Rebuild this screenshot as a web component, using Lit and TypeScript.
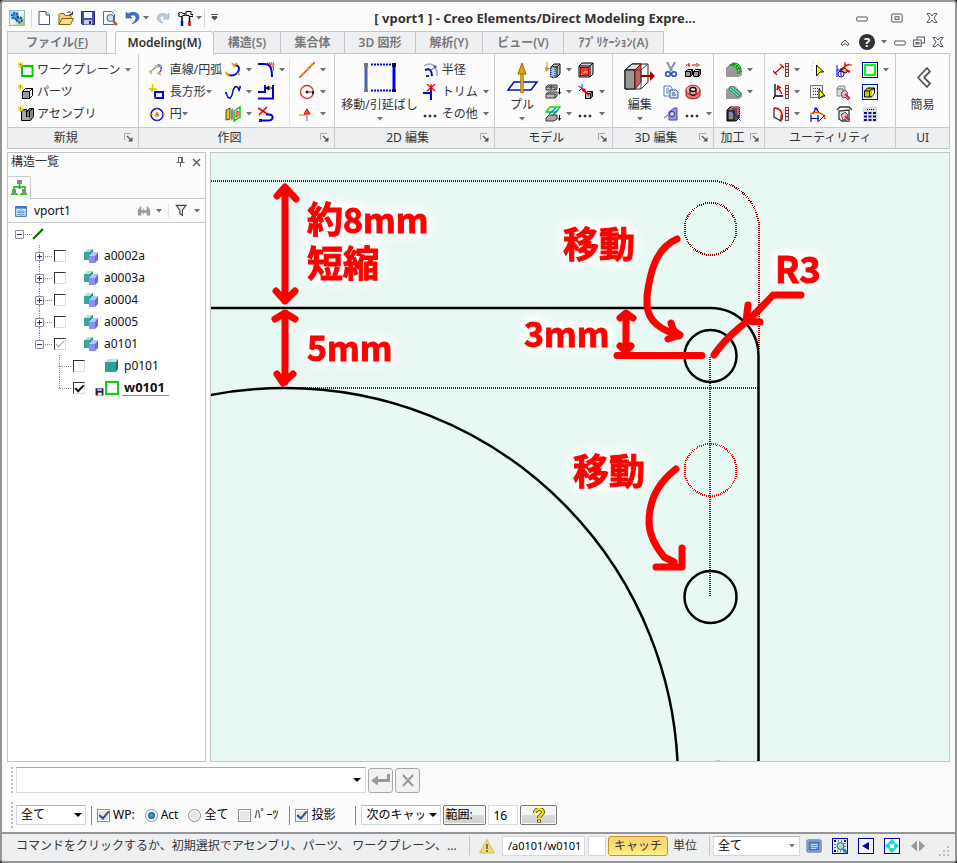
import { LitElement, html, svg, css, nothing, type TemplateResult } from "lit";
import { customElement, property, state } from "lit/decorators.js";
import { classMap } from "lit/directives/class-map.js";

type Art = TemplateResult;

const cubeArt = (x: number, y: number, s: number, d: number, face = "#999", top = "#ddd", side = "#666", line = "#000") => svg`
  <path d="M${x} ${y + d}L${x + d} ${y}H${x + s + d}L${x + s} ${y + d}Z" fill=${top} stroke=${line}/>
  <path d="M${x + s} ${y + d}L${x + s + d} ${y}V${y + s}L${x + s} ${y + s + d}Z" fill=${side} stroke=${line}/>
  <path d="M${x} ${y + d}H${x + s}V${y + s + d}H${x}Z" fill=${face} stroke=${line}/>`;

const sparkArt = svg`<path d="M0 0.5L5 5.5M5 0.5L0 5.5M2.500 0V6M0 3H5.500" stroke="#d8c800" stroke-width="1"/><path d="M2 2h1v1h-1z" fill="#7a6a00"/>`;
const rulerArt = svg`<rect x="12.500" y="1.500" width="3" height="13" fill="#e4e4e4" stroke="#555"/><path d="M13 4.500h2M13 7.500h2M13 10.500h2" stroke="#d00"/>`;
const hammerArt = svg`<path d="M5 9l4-3 3 3-1 2 3 3-2 2-3-3-2 1z" fill="#ccc" stroke="#555"/><path d="M9 10l4 4" stroke="#d22" stroke-width="2"/>`;

const ICONS: Record<string, Art> = {
  app: svg`<defs><linearGradient id="ga" x1="0" y1="0" x2="1" y2="1"><stop offset="0" stop-color="#a8d0f4"/><stop offset=".5" stop-color="#eef6fc"/><stop offset="1" stop-color="#8cc63f"/></linearGradient></defs><rect x=".5" y=".5" width="15" height="15" fill="url(#ga)" stroke="#9bb"/><circle cx="6" cy="6" r="3" fill="#5b9bd5" stroke="#1c5f9e" stroke-width="2.500" stroke-dasharray="2 1"/><circle cx="10.500" cy="10" r="2.500" fill="#7fb2dd" stroke="#174f86" stroke-width="2" stroke-dasharray="2 1"/>`,
  page: svg`<path d="M3 1.500h7l3.500 3.500v9.500H3z" fill="#fff" stroke="#3f5878"/><path d="M10 1.500v3.500h3.500" fill="#dce6f2" stroke="#3f5878"/>`,
  folder: svg`<path d="M1 14.500V4.500l1-1h4l1 2h6v3" fill="#f5d27a" stroke="#8a6210"/><path d="M1 14.500L4 8.500h11.500L12.500 14.500z" fill="#fbe08c" stroke="#8a6210"/><path d="M9 3c2-2 4-1 4.500 1M14.500 1.500v3h-3" fill="none" stroke="#333"/>`,
  disk: svg`<path d="M1.500 1.500h13v13h-12l-1-1z" fill="#4750b8" stroke="#252a70"/><rect x="4" y="2" width="8" height="6" fill="#f4f6ff"/><rect x="4" y="10" width="8" height="4.500" fill="#ccd"/><rect x="9" y="11" width="2" height="3" fill="#252a70"/>`,
  minidisk: svg`<path d="M1 2h14v13H2l-1-1z" fill="#223"/><rect x="4" y="3" width="8" height="4" fill="#bbc"/><rect x="5" y="10" width="7" height="5" fill="#eee"/>`,
  preview: svg`<path d="M1.500 1.500h8l3 3v10h-11z" fill="#fff" stroke="#5a6a80"/><circle cx="8.500" cy="8" r="3.500" fill="#cfe4f5" stroke="#456"/><path d="M11 11l4 4" stroke="#b06a20" stroke-width="2.500"/>`,
  undo: svg`<path d="M2 2v6h6L6 6c3-2 6-1 6 2 0 2-2 4-4 6 5-2 7-4 7-7 0-5-7-6-11-3z" fill="#3f74c4" stroke="#2a56a0" stroke-width=".6"/>`,
  redo: svg`<path d="M14 3v6H8l2-2c-3-2-5-1-5 1 0 2 2 4 3 5-4-1-6-3-6-5 0-4 6-6 10-3z" fill="#b9cde4" stroke="#8faaca" stroke-width=".6"/>`,
  tools: svg`<path d="M1 3.500c2-2 4-1 5 0h2v2H6c-1 1-3 2-5 0l2-1zM9 1.500h5v3h2v2h-3l-1-1H9z" fill="#fff" stroke="#000"/><path d="M5 6v5M12.500 6v5" stroke="#000" stroke-width="1.500"/><path d="M5 11v5" stroke="#00c" stroke-width="2.500"/><path d="M12.500 11v5" stroke="#d00" stroke-width="2.500"/>`,
  workplane: svg`<rect x="4" y="4" width="10.500" height="10" fill="#fff" stroke="#0c0" stroke-width="2"/>${sparkArt}`,
  part: svg`${cubeArt(4.5, 4.5, 7, 3, "#999", "#ddd", "#fff")}${sparkArt}`,
  assembly: svg`<path d="M3.500 5.500l2-2h3l1 2 2-3h4v8l-3 4h-9z" fill="#888" stroke="#000"/><path d="M8.500 6v5h3V5l3-2M8 6l2-2" fill="none" stroke="#000"/><path d="M4 6h4v5h3v3H4z" fill="#aaa"/>${sparkArt}`,
  arcline: svg`<path d="M1 10l6-5M8 3c5-1 6 4 2 8" fill="none" stroke="#8a93b8" stroke-width="1.500"/><path d="M0 9l3 3M6 3l3 3M8 11l4 2" stroke="#e0b020" stroke-width="1.500"/><path d="M9 4c4 0 4 4 1 7" fill="none" stroke="#33a" stroke-dasharray="2 1"/>`,
  rect: svg`<rect x="6" y="8" width="8" height="6" fill="none" stroke="#00f" stroke-width="2"/><path d="M3.500 0v7M0 5h8M1 4l2 3 3-3" fill="none" stroke="#e5c400" stroke-width="1.500"/><circle cx="5.500" cy="14" r="1" fill="#e80"/>`,
  circle: svg`<circle cx="8" cy="8.500" r="6" fill="none" stroke="#00f" stroke-width="1.500"/><path d="M8 0v4M8 13v3M0 8.500h4M12 8.500h4" stroke="#e0a000"/><path d="M8 6l2 4H6z" fill="#ffd060" stroke="#e08000"/><path d="M7.500 8h1v1h-1z" fill="#00c"/>`,
  arc2: svg`<path d="M2 12c5 3 11 1 12-5 0-3-2-4-5-4" fill="none" stroke="#0018e0" stroke-width="2"/><path d="M0 10l4 4M7 1l3 4M10 3l2-2M12 11l3 2" stroke="#e8a800" stroke-width="2"/>`,
  spline: svg`<path d="M1.500 9c1 7 5 6 6 0S11 1 13 4s0 4 2 0" fill="none" stroke="#0000d0" stroke-width="1.500"/><path d="M0 8h2v2H0zM4 13h2v2H4zM14 2h2v2h-2zM9 2h2v2H9z" fill="#335"/>`,
  offset: svg`<path d="M1 4l4-2v11l-4 1z" fill="#ddc800" stroke="#444"/><path d="M6 4l2-2v11l-2 2z" fill="#888"/><path d="M9 5l6-4v10l-6 4z" fill="#fff" stroke="#0c0" stroke-width="1.500"/><path d="M11 6l2-1v5l-2 1z" fill="#fff" stroke="#d00"/>`,
  fillet: svg`<path d="M0 2h6c6 0 8 3 8 13" fill="none" stroke="#00c" stroke-width="2"/><path d="M9 1h7v8c0-4-3-7-7-8" fill="#f7a0a0" stroke="#d00" stroke-width="1.200" stroke-dasharray="1 1"/>`,
  corner: svg`<path d="M0 8h7V1M0 14.500h15V1" fill="none" stroke="#00e" stroke-width="2"/><path d="M9 4h6M8 4l3-2v4z" stroke="#000" fill="#000"/>`,
  tangent: svg`<path d="M1 9l8-8M0 2l11 7" stroke="#d00" stroke-width="1.500"/><path d="M2 14.500h8c6 0 6-6 1-6l-3 0" fill="none" stroke="#00c" stroke-width="2"/><path d="M1 13h3v3H1z" fill="#224"/>`,
  cline: svg`<path d="M0 16L16 0" stroke="#d33" stroke-width="1.400"/><path d="M3 13l2-2M8 8l2-2M12 3l2-1" stroke="#e6a100" stroke-width="2.500"/>`,
  ccircle: svg`<circle cx="8" cy="8" r="6.500" fill="none" stroke="#d33" stroke-width="1.400"/><path d="M8 8h7" stroke="#333"/><circle cx="8" cy="8" r="1.500" fill="#222"/><path d="M13 7h2v3h-2z" fill="#222"/>`,
  cperp: svg`<path d="M0 9h8" stroke="#e6c080" stroke-width="2"/><path d="M8 9v6" stroke="#caa" stroke-width="2"/><path d="M8 9h7" stroke="#e8d0b0" stroke-width="1"/><path d="M8 3l3 5H5z" fill="#f55" stroke="#c00"/>`,
  radius: svg`<path d="M1 4c7-5 14 0 13 10" fill="none" stroke="#99f" stroke-width="1.500"/><path d="M2 8c5-2 7 1 7 6" fill="none" stroke="#00d" stroke-width="2"/><path d="M3 13h3v2H3z" fill="#333"/><path d="M7 9l5-4" stroke="#557"/><path d="M10 3l4 1-2 3z" fill="#557"/>`,
  trim: svg`<path d="M0 9h8M8 3v13" fill="none" stroke="#00e" stroke-width="2"/><path d="M4 0l8 7M12 0l-8 7M8 0v7" stroke="#e00" stroke-width="1.200"/>`,
  dots: svg`<path d="M1 9h2v2H1zM6 9h2v2H6zM11 9h2v2h-2z" fill="#333" stroke="#333" stroke-width=".5"/>`,
  pullblock: svg`<path d="M6 5l3-3h6v10l-3 3H6z" fill="#bbb" stroke="#000"/><path d="M12 5v10M12 5l3-3M6 5h6" stroke="#000"/><path d="M6 5h4v10H6z" fill="#9cf" stroke="#009" stroke-dasharray="1 1"/><path d="M2 0v8M0 6l2 3 2-3z" stroke="#d09000" fill="#f0b000"/>`,
  stack: svg`<path d="M1 3l2-2h9v4l-1 1H1zM1 10l2-2h9v4l-2 2H1z" fill="#bbb" stroke="#333"/><path d="M1 3h9v3M6 1v5M1 10h9v4" stroke="#333" fill="none"/><path d="M14.500 4v5" stroke="#000"/><path d="M13 8h3l-1.500 3z" fill="#000"/>`,
  loft: svg`<path d="M1 6l4-5h10l-4 5z" fill="#dfd" stroke="#0d0" stroke-width="1.400"/><path d="M4 8l7-6M8 9l5-5" stroke="#08f" stroke-width="1.500"/><path d="M1 12l3-3h8v4l-3 2H1z" fill="#aaa" stroke="#333"/><path d="M14.500 9v4" stroke="#000"/><path d="M13 12h3l-1.500 3z" fill="#000"/>`,
  shell: svg`<path d="M1 4l3-3h11v11l-3 3H1z" fill="#ccc" stroke="#000"/><path d="M12 4v11M12 4l3-3M1 4h11" stroke="#000"/><rect x="2.500" y="5.500" width="8" height="8" fill="#f33" stroke="#a00"/><path d="M3 13l3-3h4" fill="none" stroke="#fbb"/>`,
  movepart: svg`${cubeArt(7.5, 7.5, 5, 2, "#bbb", "#ddd", "#777")}<path d="M0 2l4 2M4 0v4L1 7" stroke="#22c" fill="none"/><path d="M4 5l7 6" stroke="#d00" stroke-width="1.800"/><path d="M3 4l5 1-3 3z" fill="#d00"/>`,
  scissors: svg`<path d="M4 0l5 9M12 0L7 9" stroke="#7c93b8" stroke-width="2"/><circle cx="5" cy="12" r="2.300" fill="none" stroke="#2456a8" stroke-width="1.600"/><circle cx="11" cy="12" r="2.300" fill="none" stroke="#2456a8" stroke-width="1.600"/>`,
  copy: svg`<path d="M1 2h6l2 2v8H1z" fill="#fff" stroke="#567bb0"/><path d="M3 5h3M3 7h4M3 9h3" stroke="#567bb0"/><path d="M7 6h6l2 2v6H7z" fill="#dbe8f7" stroke="#2c5596"/><path d="M9 9h3M9 11h4" stroke="#2c5596"/>`,
  paste: svg`<path d="M6 14V6l5-4h3v12z" fill="#9494ee" stroke="#44a"/><circle cx="9" cy="8" r="2.500" fill="#ddf" stroke="#225"/><path d="M1 12l4-3 2 3" fill="none" stroke="#88a" stroke-width="1.500"/>`,
  pattern: svg`<path d="M1 3h14" stroke="#c00" stroke-dasharray="4 2"/><path d="M4 1v4M12 1v4" stroke="#c00"/>${cubeArt(0.5, 7.5, 5, 2, "#999", "#ccc", "#777")}${cubeArt(8.5, 7.5, 5, 2, "#999", "#ddd", "#777")}`,
  ring: svg`<path d="M1 6v5c0 5 14 5 14 0V6z" fill="#e07878" stroke="#a11"/><ellipse cx="8" cy="6" rx="7" ry="4.800" fill="#f0a8a8" stroke="#b22"/><ellipse cx="8" cy="5.500" rx="3" ry="2" fill="#fff" stroke="#000" stroke-width="1.300"/><path d="M5 6v4c1 2 5 2 6 0V6" fill="none" stroke="#000"/>`,
  blend: svg`<path d="M0 6l4-4h5l7 7v4l-3 2H0z" fill="#999"/><path d="M4 3c6 0 8 4 8 9l3-3c0-6-3-8-8-8z" fill="#7e7" stroke="#080"/><path d="M6 2c6 0 7 4 8 8M9 1l-2 2M12 3l-2 2M14 6l-3 1" stroke="#080" fill="none"/>`,
  chamfer: svg`<path d="M0 6l4-4h5l7 7v4l-3 2H0z" fill="#999"/><path d="M3 5l3-3 9 8-3 3z" fill="#9e9" stroke="#185"/><path d="M5 4l8 7" stroke="#28c" stroke-width="1.500"/>`,
  draft: svg`<path d="M1 4l3-3h9v11l-3 3H1z" fill="#555" stroke="#000"/><path d="M2 5h6v9H2z" fill="#888" stroke="#000"/><path d="M4 4l3-3h5v8" fill="none" stroke="#f06080" stroke-width="1.500"/><path d="M13.500 1v14M6 6l10 10" stroke="#00d" stroke-dasharray="1 1"/>`,
  measure1: svg`<path d="M2 11l8-7" stroke="#d00" stroke-width="1.300"/><path d="M0 9l4 4M7 2l4 4" stroke="#d00" stroke-width="1.300"/>${rulerArt}`,
  measure2: svg`<path d="M2 0v12h8M2 12l-2 3" fill="none" stroke="#000" stroke-width="1.300"/><path d="M9 10L5 3M4 6l1-4 3 2" fill="none" stroke="#d00" stroke-width="1.500"/>${rulerArt}`,
  measure3: svg`<path d="M1 2v9l7 4V9" fill="none" stroke="#333" stroke-width="1.300"/><path d="M1 2c6 0 9 4 8 12" fill="none" stroke="#d00" stroke-width="1.500"/>${rulerArt}`,
  pick: svg`<path d="M6.500 3l7 7H10l-3.500 4z" fill="#ff0" stroke="#000"/><path d="M1 4h2M3 0l1 2M8 1l1-1M1 8l2-1" stroke="#d8c000" stroke-dasharray="1 1"/>`,
  list: svg`<rect x=".5" y="1.500" width="12" height="12" fill="#eee" stroke="#777"/><path d="M3 4.500h8M3 7.500h8M3 10.500h8" stroke="#333" stroke-dasharray="1 1"/><path d="M9 5l6 7h-3l-3 3z" fill="#ff0" stroke="#000"/>`,
  dims: svg`<path d="M1 3v12M5 6v8M1 8h4" stroke="#00c"/><path d="M8 3h8M9 0v6M4 8l9-6" stroke="#d00" stroke-width="1.200"/><path d="M4 9l5-3 3 3-2 2z" fill="#bbb" stroke="#600"/><circle cx="5" cy="12" r="3" fill="none" stroke="#00c"/><path d="M10 8l4 2" stroke="#d00" stroke-width="2"/>`,
  props: svg`<path d="M1 4l2-2h6v8l-2 2H1z" fill="#ddd" stroke="#888"/><path d="M1 5h6v6" fill="none" stroke="#666"/>${hammerArt}`,
  inspect: svg`<path d="M1 4l3-3h9l3 3M3 5v8l3 2h7V4z" fill="#fff" stroke="#333" stroke-width="1.300"/>${hammerArt}`,
  dimset: svg`<path d="M3 8l3-6 3 5M1 9v7M1 12.500h8M8 9v7" fill="none" stroke="#00c" stroke-width="1.200"/><path d="M0 8c6-3 14-2 15 5" fill="none" stroke="#e50" stroke-width="1.500"/><path d="M9 15l6-6M4 2l4 2" stroke="#00c"/>`,
  greenbox: svg`<rect x=".500" y=".500" width="15" height="15" fill="#fff" stroke="#00a"/><rect x="3" y="3" width="10" height="10" fill="#fff" stroke="#0f0" stroke-width="2"/>`,
  shade: svg`<rect x=".500" y=".500" width="15" height="15" fill="#e8f0fa" stroke="#029"/><path d="M2.500 7l3-3h7v5l-3 4h-7z" fill="#cc0" stroke="#000"/><path d="M2.500 7h5v6M7.500 7l2-2h3" fill="none" stroke="#000"/><path d="M10 8l2-2v3l-2 3z" fill="#fff"/>`,
  calc: svg`<rect x="1" y="1" width="14" height="15" fill="#ddd"/><path d="M5 3.500h8" stroke="#000" stroke-dasharray="1 1"/><path d="M2 6h3v2H2zM6.500 6h3v2h-3zM11 6h3v2h-3zM2 9.500h3v2H2zM6.500 9.500h3v2h-3zM11 9.500h3v2h-3zM2 13h3v2H2zM6.500 13h3v2h-3zM11 13h3v2h-3z" fill="#118"/>`,
  binoc: svg`<path d="M2 5h3v8H1V8zM11 5h3l1 3v5h-4zM5 7h6v3H5zM3 3h2v2H3zM11 3h2v2h-2z" fill="#999"/><path d="M7.500 5v7" stroke="#999"/>`,
  filter: svg`<path d="M1.500 1.500h11L8.500 7v6l-3-2V7z" fill="#e6ede8" stroke="#444" stroke-width="1.300"/>`,
  treetab: svg`<rect x="6" y="0" width="5" height="4" fill="#888"/><path d="M8.500 4v5M3 10V7h11v3" fill="none" stroke="#0b0" stroke-width="1.500"/><rect x="1" y="9" width="4" height="4" fill="#888"/><rect x="11" y="9" width="4" height="4" fill="#888"/><path d="M0 15v-1h6v1M10 15v-1h6v1" fill="none" stroke="#0b0" stroke-width="1.500"/>`,
  viewport: svg`<rect x="1" y="2" width="14" height="13" fill="#fff" stroke="#1d57a5" stroke-width="1.300"/><path d="M1 2h14v3H1z" fill="#3c7fd0"/><path d="M3 8h4M3 10h4M3 12.500h4M9 8h4M9 10h4M9 12.500h4" stroke="#1d57a5"/><path d="M8 5v10" stroke="#1d57a5"/>`,
  asm: svg`<path d="M1 4h6v8H1z" fill="#3aa79b"/><path d="M1 4l3-3h6L7 4z" fill="#a8e8d8"/><path d="M7 4l3-3v8l-3 3z" fill="#1f8278"/><path d="M6 8h6v7H6z" fill="#8f8dfb"/><path d="M6 8l3-4h6l-3 4z" fill="#a9cdfb"/><path d="M12 8l3-4v8l-3 3z" fill="#6a68dc"/>`,
  prt: svg`<path d="M1 4l3-3h10l-2 3z" fill="#a4ecd8"/><path d="M1 4h11v10H1z" fill="#2fa392"/><path d="M12 4l2-3v10l-2 3z" fill="#1c7468"/>`,
  wp: svg`<rect x="2" y="2" width="12" height="12" fill="#fff" stroke="#1c1" stroke-width="2"/>`,
  warn: svg`<path d="M8 1.500L15.500 15H.500z" fill="#f2dc6c" stroke="#d8bc52" stroke-linejoin="round"/><path d="M8 6v5M8 12v2" stroke="#555" stroke-width="1.600"/>`,
  screen: svg`<rect x="1" y="2" width="14" height="12" rx="1" fill="#cfd8ea" stroke="#345a9c"/><rect x="3" y="4" width="10" height="8" fill="#5c90e4" stroke="#24509c"/><path d="M5 6.500h7M5 8.500h7M5 10.500h5" stroke="#bcd6ff"/>`,
  zoomfit: svg`<rect x=".500" y=".500" width="15" height="15" fill="#e8f2f6" stroke="#00a"/><path d="M3 3h10v10H3z" fill="none" stroke="#000" stroke-dasharray="1 2"/><path d="M2 2h2v2H2zM12 2h2v2h-2zM2 12h2v2H2z" fill="#00a"/><circle cx="8.500" cy="8" r="3.500" fill="#9ed6d0" stroke="#266"/><path d="M11 11l4 4" stroke="#1a8ab0" stroke-width="2.500"/>`,
  prev: svg`<rect x=".500" y=".500" width="15" height="15" fill="#f4f6fa" stroke="#00a"/><path d="M4 8l7-4v8z" fill="#008"/>`,
  pan: svg`<rect x=".500" y=".500" width="15" height="15" fill="#fff" stroke="#00a"/><path d="M8 1l4 4-3 1H7L4 5zM8 15l4-4-3-1H7l-3 1zM1 8l4-4 1 3v2l-1 3zM15 8l-4-4-1 3v2l1 3z" fill="#1dd"/><path d="M7 7h2v2H7z" fill="#fff"/>`,
  steps: svg`<path d="M7 2.500v11L1 8zM9 2.500v11l6-5.500z" fill="#999"/>`,
};

const BIG: Record<string, Art> = {
  stretch: svg`<path d="M8 2.500h22M8 28.500h22" stroke="#00f" stroke-width="2" stroke-dasharray="2 1"/><path d="M3 2v27" stroke="#46629a" stroke-width="3"/><path d="M31 2v27" stroke="#00f" stroke-width="3"/><path d="M1 1h4v4H1zM1 27h4v3H1z" fill="#777"/><path d="M29 1h4v4h-4zM29 27h4v3h-4z" fill="#112"/>`,
  pull: svg`<path d="M9 20h23l-6 8H3z" fill="none" stroke="#0010b8" stroke-width="1.500"/><path d="M17 6v25" stroke="#a87200" stroke-width="3.500"/><path d="M17 6v24" stroke="#f0b020" stroke-width="1.500"/><path d="M17 1l4 11h-8z" fill="#e0a010" stroke="#9a6a00"/>`,
  edit3d: svg`<path d="M2 8l7-6h16v18l-7 7H2z" fill="#fff" stroke="#222"/><path d="M2 8l7-6h9l-6 6z" fill="#ddd" stroke="#000"/><path d="M2 8h10v19H2z" fill="#999" stroke="#000"/><path d="M12 8l6-6v18l-6 7z" fill="#b66" stroke="#800"/><path d="M18 27V8l7-6M12 8h6" stroke="#444"/><path d="M18 14h10" stroke="#900" stroke-width="2"/><path d="M27 9l5 5-5 5z" fill="#900"/>`,
  simple: svg`<path d="M21 6L12 15.500 21 25l3-3.500-6-6 6-6z" fill="#fff" stroke="#555" stroke-width="1.800" stroke-linejoin="round"/>`,
};

const icon = (name: string, size = 16) => html`<svg class="ic" width=${size} height=${size} viewBox="0 0 16 16" fill="none" aria-hidden="true">${ICONS[name]}</svg>`;
const big = (name: string) => html`<svg class="ic" width="34" height="31" viewBox="0 0 34 31" fill="none" aria-hidden="true">${BIG[name]}</svg>`;
const caret = html`<svg class="caret" width="6" height="4" viewBox="0 0 6 4" aria-hidden="true"><path d="M0 0h6L3 3.500z" fill="currentColor"/></svg>`;

const winArt: Record<string, Art> = {
  min: svg`<rect x=".700" y="5" width="10.500" height="4" rx="1"/>`,
  max: svg`<rect x=".700" y="2" width="10.500" height="8" rx="1"/><rect x="4" y="4.800" width="4" height="2.500"/>`,
  restore: svg`<rect x="4" y="1" width="7.500" height="6"/><rect x=".700" y="4" width="7.500" height="6.500" fill="#fbfbfb"/><rect x="3" y="6.500" width="3" height="1.500"/>`,
  close: svg`<path d="M1 1.500h3l2 2.500 2-2.500h3L8 6l3 4.500H8L6 8l-2 2.500H1L4 6z"/>`,
  up: svg`<path d="M2 8l4-4 4 4-1 1.500-3-2-3 2z"/>`,
};
const winBtn = (name: string, label: string) => html`<button class="win" aria-label=${label}><svg width="12" height="12" viewBox="0 0 12 12" fill="none" stroke="#556" aria-hidden="true">${winArt[name]}</svg></button>`;

const base = css`
  * { box-sizing: border-box; }
  button, input, select { font: inherit; color: inherit; margin: 0; }
  button { background: none; border: 0; padding: 0; display: inline-flex; align-items: center; white-space: nowrap; }
  svg { display: block; flex: none; }
  .caret { color: #707070; }
`;

interface Cmd { icon: string; label?: string; name: string; drop?: boolean; }
interface Col { kind?: "text" | "tight" | "line"; cmds: Cmd[]; }
interface Group { title: string; cls: string; launcher?: boolean; big?: { icon: string; label: string; drop?: boolean }; cols: Col[]; }

const c = (ic: string, name: string, drop = false): Cmd => ({ icon: ic, name, drop });
const t = (ic: string, label: string, drop = false): Cmd => ({ icon: ic, name: label, label, drop });

const GROUPS: Group[] = [
  { title: "新規", cls: "g-new", launcher: true, cols: [{ kind: "text", cmds: [t("workplane", "ワークプレーン", true), t("part", "パーツ"), t("assembly", "アセンブリ")] }] },
  { title: "作図", cls: "g-draw", launcher: true, cols: [
    { kind: "tight", cmds: [t("arcline", "直線/円弧"), t("rect", "長方形", true), t("circle", "円", true)] },
    { cmds: [c("arc2", "円弧", true), c("spline", "スプライン", true), c("offset", "オフセット", true)] },
    { cmds: [c("fillet", "フィレット", true), c("corner", "コーナー"), c("tangent", "接線")] },
    { kind: "line", cmds: [c("cline", "補助線", true), c("ccircle", "補助円", true), c("cperp", "垂直線", true)] },
  ] },
  { title: "2D 編集", cls: "g-edit2", launcher: true, big: { icon: "stretch", label: "移動/引延ばし", drop: true }, cols: [{ kind: "text", cmds: [t("radius", "半径"), t("trim", "トリム", true), t("dots", "その他", true)] }] },
  { title: "モデル", cls: "g-model", launcher: true, big: { icon: "pull", label: "プル", drop: true }, cols: [
    { cmds: [c("pullblock", "押し出し", true), c("stack", "積み重ね", true), c("loft", "ロフト", true)] },
    { cmds: [c("shell", "シェル"), c("movepart", "配置", true), c("dots", "その他", true)] },
  ] },
  { title: "3D 編集", cls: "g-edit3", launcher: true, big: { icon: "edit3d", label: "編集", drop: true }, cols: [
    { cmds: [c("scissors", "切り取り"), c("copy", "コピー"), c("paste", "貼り付け")] },
    { cmds: [c("pattern", "パターン"), c("ring", "リング"), c("dots", "その他", true)] },
  ] },
  { title: "加工", cls: "g-mach", launcher: true, cols: [{ cmds: [c("blend", "ブレンド", true), c("chamfer", "面取り", true), c("draft", "勾配")] }] },
  { title: "ユーティリティ", cls: "g-util", cols: [
    { cmds: [c("measure1", "距離", true), c("measure2", "角度", true), c("measure3", "長さ", true)] },
    { cmds: [c("pick", "選択"), c("list", "一覧選択"), c("dimset", "寸法")] },
    { cmds: [c("dims", "寸法編集"), c("props", "特性"), c("inspect", "検査")] },
    { cmds: [c("greenbox", "ワークプレーン表示", true), c("shade", "陰影"), c("calc", "計算機")] },
  ] },
  { title: "UI", cls: "g-ui", big: { icon: "simple", label: "簡易" }, cols: [] },
];

@customElement("app-ribbon")
export class AppRibbon extends LitElement {
  static styles = [base, css`
    :host { display: block; padding: 0 5px; }
    .ribbon { display: grid; grid-template-columns: 131fr 197fr 160fr 118fr 102fr 51fr 131fr 53fr; border: 1px solid #c3c5c8; border-top: 0; background: #fcfcfd; }
    .group { display: flex; flex-direction: column; min-width: 0; border-right: 1px solid #c9cbce; }
    .group:last-child { border-right: 0; }
    .body { display: flex; gap: 6px; height: 73px; padding: 5px 0 2px 10px; overflow: hidden; }
    .g-edit2 .body { padding-left: 6px; gap: 5px; }
    .g-mach .body { padding-left: 12px; }
    .g-util .body { gap: 10px; padding-left: 8px; }
    .g-ui .body { padding-left: 0; justify-content: center; }
    .col { display: flex; flex-direction: column; flex: none; }
    .col button { height: 22px; gap: 5px; }
    .col.text .ic { margin-right: -2px; }
    .col.tight { margin-right: -3px; }
    .col.tight button { gap: 0; }
    .col.tight .ic { margin-right: 5px; }
    .col.line { border-left: 1px solid #dcdee0; padding-left: 9px; margin-left: -2px; }
    .large { flex-direction: column; align-items: center; height: 66px; padding-top: 3px; }
    .large .caret { margin-top: 3px; }
    .large span { line-height: 18px; margin-top: 3px; }
    .foot { display: flex; align-items: center; height: 21px; background: #eeeff1; border-top: 1px solid #c9cbce; }
    .foot h2 { flex: 1; margin: 0; font-size: 12px; font-weight: 400; line-height: 20px; text-align: center; white-space: nowrap; }
    .foot button { margin-right: 4px; }
  `];
  render() {
    return html`<div class="ribbon">${GROUPS.map((g) => html`
      <section class="group ${g.cls}">
        <div class="body">
          ${g.big ? html`<button class="large">${big(g.big.icon)}<span>${g.big.label}</span>${g.big.drop ? caret : nothing}</button>` : nothing}
          ${g.cols.map((col) => html`<div class=${classMap({ col: true, text: col.kind === "text", tight: col.kind === "tight", line: col.kind === "line" })}>
            ${col.cmds.map((m) => html`<button aria-label=${m.name}>${icon(m.icon)}${m.label ? html`<span>${m.label}</span>` : nothing}${m.drop ? caret : nothing}</button>`)}
          </div>`)}
        </div>
        <div class="foot"><h2>${g.title}</h2>${g.launcher ? html`<button aria-label="${g.title}の詳細"><svg width="10" height="10" viewBox="0 0 10 10" fill="none" stroke="#aaa" aria-hidden="true"><path d="M.500 7V.500H7"/><path d="M3 3l4 4" stroke="#555" stroke-width="1.300"/><path d="M8.500 4v4.500H4z" fill="#555" stroke="none"/></svg></button>` : nothing}</div>
      </section>`)}</div>`;
  }
}

interface Row { name: string; level: 1 | 2; kind: "asm" | "prt" | "wp"; open?: boolean; mark?: "on" | "dim"; last?: boolean; }
const ROWS: Row[] = [
  { name: "a0002a", level: 1, kind: "asm" },
  { name: "a0003a", level: 1, kind: "asm" },
  { name: "a0004", level: 1, kind: "asm" },
  { name: "a0005", level: 1, kind: "asm" },
  { name: "a0101", level: 1, kind: "asm", open: true, mark: "dim", last: true },
  { name: "p0101", level: 2, kind: "prt" },
  { name: "w0101", level: 2, kind: "wp", mark: "on", last: true },
];

@customElement("structure-panel")
export class StructurePanel extends LitElement {
  static styles = [base, css`
    :host { display: flex; flex-direction: column; border: 1px solid #c3c5c8; background: #fff; }
    .head { display: flex; align-items: center; gap: 6px; height: 18px; padding: 0 4px 0 3px; background: #fbfbfb; }
    .head h1 { flex: 1; margin: 0; font-size: 12px; font-weight: 400; line-height: 18px; }
    .tabs { display: flex; align-items: flex-end; height: 28px; background: #fbfbfb; }
    .tab { width: 23px; height: 23px; justify-content: center; border: 1px solid #c9cbce; border-width: 1px 1px 0 0; border-radius: 2px 2px 0 0; }
    .fill { flex: 1; align-self: stretch; border-bottom: 1px solid #c9cbce; }
    .bar { display: flex; align-items: center; height: 24px; padding: 0 5px 0 7px; gap: 6px; background: #fbfbfb; border-bottom: 1px solid #c9cbce; }
    .bar .name { flex: 1; padding-left: 1px; color: #111; }
    .bar .find { gap: 5px; padding-right: 6px; border-right: 1px solid #e2e4e6; }
    .bar .flt { gap: 5px; }
    ul { list-style: none; margin: 0; padding: 0; }
    li { display: flex; align-items: center; height: 22px; color: #111; }
    .root { padding-left: 7px; }
    .l1 { padding-left: 27px; }
    .l2 { padding-left: 51px; }
    .exp { display: flex; flex-direction: column; align-items: center; align-self: stretch; width: 9px; }
    .exp i { flex: 1; border-left: 1px dotted #888; }
    .exp i.off { border-color: transparent; }
    .exp button { width: 9px; height: 9px; border: 1px solid #889; border-radius: 1px; background: #fff; }
    .h { width: 7px; border-top: 1px dotted #888; margin: 0 2px 0 1px; }
    .root .h { margin-right: 0; }
    .branch { display: flex; flex-direction: column; align-self: stretch; width: 12px; margin-right: 2px; }
    .branch i { height: 11px; border-left: 1px dotted #888; }
    .branch i + i { border-top: 1px dotted #888; }
    .branch.end i + i { border-left-color: transparent; }
    input { appearance: none; display: grid; place-items: center; width: 12px; height: 12px; border: 1px solid; border-color: #333 #ddd #ddd #333; background: #fff; }
    input.on::before { content: ""; width: 7px; height: 3px; border: solid #000; border-width: 0 0 2px 2px; transform: translateY(-1px) rotate(-45deg); }
    input.dim::before { border-color: #999; border-width: 0 0 1px 1px; }
    .l1 .k { margin: 0 5px 0 17px; }
    .l2 .k { display: flex; width: 34px; margin: 0 4px 0 1px; justify-content: flex-end; align-items: flex-end; }
    .cur { font-weight: 700; font-size: 13px; line-height: 15px; border-bottom: 1px solid #1d1; padding: 0 4px 0 2px; margin-left: -2px; }
  `];
  render() {
    const exp = (open: boolean, up: boolean, down: boolean) => html`<span class="exp"><i class=${up ? "" : "off"}></i><button aria-label=${open ? "閉じる" : "開く"}><svg width="7" height="7" viewBox="0 0 7 7" stroke="#236" aria-hidden="true"><path d=${open ? "M1 3.500h5" : "M1 3.500h5M3.500 1v5"}/></svg></button><i class=${down ? "" : "off"}></i></span>`;
    return html`
      <div class="head"><h1>構造一覧</h1>
        <button aria-label="固定"><svg width="11" height="12" viewBox="0 0 11 12" fill="none" stroke="#666" aria-hidden="true"><path d="M3 1.500h5M3.500 1v5M7.500 1v5M6.500 1v5M1.500 6.500h8M5.500 6.500V11"/></svg></button>
        <button aria-label="閉じる"><svg width="9" height="9" viewBox="0 0 9 9" stroke="#666" stroke-width="1.500" aria-hidden="true"><path d="M1 1l7 7M8 1L1 8"/></svg></button></div>
      <div class="tabs"><button class="tab" aria-label="構造">${icon("treetab")}</button><span class="fill"></span></div>
      <div class="bar">${icon("viewport", 12)}<span class="name">vport1</span>
        <button class="find" aria-label="検索">${icon("binoc", 14)}${caret}</button>
        <button class="flt" aria-label="フィルタ">${icon("filter", 14)}${caret}</button></div>
      <ul>
        <li class="root">${exp(true, false, false)}<span class="h"></span><svg width="12" height="12" viewBox="0 0 12 12" aria-hidden="true"><path d="M1 11L11 1" stroke="#060" stroke-width="2"/></svg></li>
        ${ROWS.map((r) => html`<li class="l${r.level}">
          ${r.level === 1 ? html`${exp(!!r.open, true, !r.last)}<span class="h"></span>` : html`<span class=${classMap({ branch: true, end: !!r.last })}><i></i><i></i></span>`}
          <input type="checkbox" aria-label=${r.name} class=${classMap({ on: !!r.mark, dim: r.mark === "dim" })} ?checked=${!!r.mark}>
          <span class="k">${r.kind === "wp" ? html`${icon("minidisk", 9)}` : nothing}${icon(r.kind)}</span>
          <span class=${r.kind === "wp" ? "cur" : ""}>${r.name}</span></li>`)}
      </ul>`;
  }
}

@customElement("drawing-view")
export class DrawingView extends LitElement {
  static styles = [base, css`
    :host { display: flex; border: 1px solid #c3c5c8; background: #e8f8f3; overflow: hidden; min-width: 0; }
    svg { width: 100%; height: 100%; min-height: 607px; flex: 1; }
    .solid { fill: none; stroke: #000; stroke-width: 2.500; }
    .ghost { fill: none; stroke: #900000; stroke-width: 2; stroke-dasharray: 1 1; shape-rendering: crispEdges; }
    .ghost.red { stroke: #f00; }
    .mark { fill: none; stroke: #f00; stroke-width: 7; stroke-linecap: round; stroke-linejoin: round; }
    .note { fill: #f00; stroke: #f00; stroke-width: 1; font: 700 36px "Noto Sans CJK JP", sans-serif; filter: drop-shadow(0 0 3px #fff) drop-shadow(0 0 4px #fff) drop-shadow(0 0 6px #fff); }
    .latin { font-size: 34px; }
  `];
  render() {
    return html`<svg role="img" aria-label="図面"><g transform="translate(-211 -153)">
      <g class="ghost">
        <path d="M211 181H711A48 48 0 0 1 759 229V350"/>
        <circle cx="710.500" cy="229" r="26"/>
        <path d="M285 388H758M710 357V597"/>
      </g>
      <circle class="ghost red" cx="710.500" cy="470" r="26"/>
      <g class="solid">
        <path d="M211 308H711A48 48 0 0 1 758.500 356V770"/>
        <circle cx="710.500" cy="356" r="26"/>
        <circle cx="710.500" cy="597" r="26"/>
        <circle cx="285" cy="781" r="393"/>
        <circle cx="718" cy="788" r="26"/>
      </g>
      <g class="note">
        <text><tspan x="307" y="233">約</tspan><tspan class="latin">8mm</tspan><tspan x="307" y="277">短縮</tspan></text>
        <text class="latin" x="307" y="361">5mm</text><text class="latin" x="524" y="347">3mm</text>
        <text x="563" y="258">移動</text><text x="775" y="283">R3</text><text x="573" y="485">移動</text>
      </g>
      <g class="mark">
        <path d="M285 188V301M277 196L285 187 296 199M276 291L285 301 295 291"/>
        <path d="M285 314V382M275 319L285 313 295 319M277 374L283 383 293 374"/>
        <path d="M626 314V350M620 318L626 313 633 318M620 346L626 351 631 346M617 355.500H702"/>
        <path d="M677 239C656 248 650 272 647 296V306C649 322 660 329 679 336M671 323L674 331 680 335 668 339"/>
        <path d="M801 295H773C764 305 755 314 746 322C736 331 726 337 714 355M748 305L746 321 760 322"/>
        <path d="M676 469C659 482 649 500 649 522C649 538 660 552 664 557L674 562M656 567H682V548"/>
      </g></g></svg>`;
  }
}

const TABS = [
  { id: "s", label: "構造(S)", w: 67 }, { id: "g", label: "集合体", w: 64 }, { id: "3", label: "3D 図形", w: 71 },
  { id: "y", label: "解析(Y)", w: 67 }, { id: "v", label: "ビュー(V)", w: 81 }, { id: "a", label: "ｱﾌﾟﾘｹｰｼｮﾝ(A)", w: 100 },
];

@customElement("flat-select")
export class FlatSelect extends LitElement {
  @property() label = "";
  @property() value = "";
  @property({ type: Boolean }) grey = false;
  static styles = [base, css`
    :host { display: grid; }
    select { grid-area: 1 / 1; appearance: none; width: 100%; height: 20px; padding: 0 16px 0 4px; border: 1px solid #d4d7dc; border-top-color: #b4b6ba; border-radius: 0; background: #fff; color: #000; }
    svg { grid-area: 1 / 1; align-self: center; justify-self: end; margin-right: 4px; pointer-events: none; }
    .grey { color: #777; }
  `];
  render() {
    return html`<select aria-label=${this.label}><option>${this.value}</option></select>
      <svg class=${this.grey ? "grey" : ""} width="8" height="4" viewBox="0 0 8 4" aria-hidden="true"><path d=${this.grey ? "M1 0h6L4 3.500z" : "M0 0h8L4 4z"} fill="currentColor"/></svg>`;
  }
}

@customElement("app-root")
export class AppRoot extends LitElement {
  @state() private active = "m";
  static styles = [base, css`
    :host { display: block; background: #20240f; color: #333; font: 12px/18px "Noto Sans", "Noto Sans CJK JP", sans-serif; }
    .window { display: flex; flex-direction: column; min-height: 100vh; border: 2px solid #969696; border-radius: 4px; background: #fbfbfb; overflow: hidden; }
    .title { display: flex; align-items: center; height: 29px; padding: 2px 17px 0 7px; gap: 6px; }
    .quick { display: flex; align-items: center; gap: 6px; }
    .quick .bar { width: 1px; height: 18px; background: #d4d6d8; margin-right: -2px; }
    .quick .bar.near { margin: 0 0 0 -4px; }
    .quick button { gap: 3px; }
    .title h1 { flex: 1; margin: 0; font-size: 13px; font-weight: 700; text-align: center; white-space: nowrap; overflow: hidden; text-overflow: ellipsis; padding-right: 4px; }
    .wins { display: flex; gap: 23px; }
    .strip { display: flex; align-items: stretch; height: 23px; padding: 0 5px; }
    .tab { justify-content: center; border: 1px solid #c3c5c8; border-left-width: 0; background: #eeeff1; color: #76787b; font-weight: 600; }
    .tab.file { width: 100px; border-left-width: 1px; }
    .tab.model { width: 99px; border: 1px solid #c3c5c8; border-bottom: 0; border-radius: 3px 3px 0 0; background: #fcfcfd; color: #333; }
    .rule { width: 8px; border-bottom: 1px solid #c3c5c8; }
    .rest { flex: 1; display: flex; justify-content: flex-end; align-items: center; gap: 7px; border-bottom: 1px solid #c3c5c8; padding-right: 6px; }
    .help { gap: 6px; margin-left: 1px; }
    .badge { display: grid; place-items: center; width: 16px; height: 16px; border-radius: 8px; background: #333; color: #fff; font-weight: 700; font-size: 13px; line-height: 16px; }
    .work { flex: 1; display: flex; gap: 4px; padding: 3px 5px 0; }
    structure-panel { width: 199px; flex: none; }
    drawing-view { flex: 1; }
    .row { display: flex; align-items: center; height: 36px; padding-left: 9px; }
    .row.opts { height: 34px; }
    .cmd { gap: 2px; }
    .grip { width: 2px; height: 26px; border-left: 2px dotted #bcc2ca; margin-right: 3px; }
    .cmd .grip { margin-right: 1px; }
    .combo { display: flex; width: 350px; height: 26px; border: 1px solid #d9dce4; border-top-color: #a8a8aa; background: #fff; }
    .combo input { flex: 1; min-width: 0; border: 0; padding: 0 4px; outline: 0; background: none; }
    .combo button { padding: 0 4px; color: #000; }
    .sq { width: 25px; height: 25px; justify-content: center; border: 1px solid #a8a8a8; border-radius: 3px; background: #f2f2f2; }
    .opts { color: #000; }
    .opts label { display: inline-flex; align-items: center; gap: 3px; white-space: nowrap; }
    .opts .sep { width: 1px; height: 19px; background: #888; margin: 0 5px; }
    .opts .sep.near { margin-left: 11px; }
    .opts .sep.far { margin-left: 20px; }
    .opts input[type="checkbox"], .opts input[type="radio"] { appearance: none; display: grid; place-items: center; width: 13px; height: 13px; border: 1px solid #8e8f8f; background: #e4e6ea; box-shadow: inset 0 0 0 1px #fff; }
    .opts input[type="radio"] { border-radius: 7px; }
    .opts input[type="checkbox"]:checked::before { content: ""; width: 8px; height: 4px; border: solid #35508f; border-width: 0 0 2px 2px; transform: translateY(-1px) rotate(-50deg); }
    .opts input[type="radio"]:checked::before { content: ""; width: 7px; height: 7px; border-radius: 4px; background: radial-gradient(#4bb4dc, #0b3a5c); }
    .s-all { width: 70px; }
    .s-catch { width: 80px; }
    .act, .parts { margin-left: 10px; }
    .raised { height: 20px; justify-content: center; border: 1px solid #777; border-radius: 2px; background: linear-gradient(#f4f4f4 50%, #dcdcdc 50%, #cfcfcf); box-shadow: inset 0 0 0 1px #f8f8f8; }
    .range { width: 43px; margin: 0 2px; justify-content: flex-start; padding-left: 1px; }
    .num { width: 30px; height: 20px; padding: 0 4px; border: 1px solid #d9dce4; background: #fff; }
    .q { width: 37px; margin-left: 2px; }
    .status { display: flex; align-items: center; height: 29px; padding: 0 5px 4px 14px; border-top: 2px solid #969696; background: #eeeff1; white-space: nowrap; }
    .msg { flex: 1; min-width: 0; margin: 0; overflow: hidden; }
    .status .sep { width: 1px; height: 19px; background: #c3c6ca; }
    .warn { margin: 0 7px 0 9px; }
    .path { width: 83px; height: 20px; padding: 0 0 0 5px; border: 1px solid #d4d7dc; background: #fff; color: #000; font-size: 11px; }
    .blank { width: 18px; height: 20px; margin: 0 2px 0 3px; border: 1px solid #d4d7dc; background: #fff; }
    .catch { width: 60px; height: 20px; justify-content: center; border: 1px solid #c4952e; border-radius: 3px; background: linear-gradient(#fbd475, #fede72 60%, #fff08f); }
    .unit { margin: 0 12px 0 5px; }
    .s-unit { width: 87px; margin: 0 6px 0 3px; }
    .tools { display: flex; gap: 10px; }
    .size { align-self: flex-end; margin-left: 12px; }
  `];
  private quick(name: string, label: string, drop = false) {
    return html`<button aria-label=${label}>${icon(name)}${drop ? caret : nothing}</button>`;
  }
  render() {
    return html`<div class="window">
      <header class="title">
        <div class="quick">${icon("app")}<span class="bar"></span>
          ${this.quick("page", "新規")}${this.quick("folder", "開く")}${this.quick("disk", "保存")}${this.quick("preview", "プレビュー")}
          ${this.quick("undo", "元に戻す", true)}${this.quick("redo", "やり直し")}${this.quick("tools", "ツール", true)}
          <span class="bar near"></span>
          <button aria-label="カスタマイズ"><svg width="7" height="7" viewBox="0 0 7 7" aria-hidden="true"><path d="M0 .500h7M1 2.500h5" stroke="#555"/><path d="M0 3h7L3.500 6.500z" fill="#555"/></svg></button></div>
        <h1>[ vport1 ] - Creo Elements/Direct Modeling Expre...</h1>
        <div class="wins">${winBtn("min", "最小化")}${winBtn("max", "最大化")}${winBtn("close", "閉じる")}</div>
      </header>
      <nav class="strip">
        <button class="tab file">ファイル(<u>F</u>)</button><span class="rule"></span>
        <button class="tab model" aria-current=${this.active === "m" ? "page" : "false"}>Modeling(M)</button>
        ${TABS.map((x) => html`<button class="tab" style="width:${x.w}px">${x.label}</button>`)}
        <div class="rest">${winBtn("up", "リボンを最小化")}<button class="help" aria-label="ヘルプ"><span class="badge">?</span>${caret}</button>${winBtn("min", "最小化")}${winBtn("restore", "元に戻す")}${winBtn("close", "閉じる")}</div>
      </nav>
      <app-ribbon></app-ribbon>
      <main class="work"><structure-panel></structure-panel><drawing-view></drawing-view></main>
      <div class="row cmd"><span class="grip"></span>
        <div class="combo"><input type="text" aria-label="コマンド入力"><button aria-label="履歴"><svg width="8" height="4" viewBox="0 0 8 4" aria-hidden="true"><path d="M0 0h8L4 4z"/></svg></button></div>
        <button class="sq" aria-label="確定"><svg width="20" height="14" viewBox="0 0 20 14" aria-hidden="true"><path d="M0 7.500l7-5V6h9V1h3v8H7v3.500z" fill="#999"/></svg></button>
        <button class="sq" aria-label="取消"><svg width="12" height="13" viewBox="0 0 12 13" stroke="#999" stroke-width="2" aria-hidden="true"><path d="M1 1l10 11M11 1L1 12"/></svg></button></div>
      <div class="row opts"><span class="grip"></span>
        <flat-select class="s-all" label="選択対象" value="全て"></flat-select><span class="sep"></span>
        <label><input type="checkbox" checked>WP:</label>
        <label class="act"><input type="radio" name="scope" checked>Act</label>
        <label class="act"><input type="radio" name="scope">全て</label>
        <label class="parts"><input type="checkbox">ﾊﾟｰﾂ</label><span class="sep near"></span>
        <label><input type="checkbox" checked>投影</label><span class="sep far"></span>
        <flat-select class="s-catch" label="キャッチ" value="次のキャッチ"></flat-select>
        <button class="raised range">範囲:</button><input class="num" type="text" aria-label="範囲" value="16">
        <button class="raised q" aria-label="ヘルプ"><svg width="12" height="15" viewBox="0 0 12 15" fill="none" aria-hidden="true"><path d="M2 5c0-5 8-5 8-1 0 3-4 3-4 6M6 11.500v3" stroke="#554400" stroke-width="4"/><path d="M2 5c0-5 8-5 8-1 0 3-4 3-4 6M6 12v2" stroke="#f4ea00" stroke-width="2.200"/></svg></button></div>
      <footer class="status">
        <p class="msg">コマンドをクリックするか、初期選択でアセンブリ、パーツ、 ワークプレーン、...</p>
        <span class="sep"></span><span class="warn">${icon("warn")}</span>
        <input class="path" aria-label="パス" value="/a0101/w0101"><span class="blank"></span>
        <button class="catch">キャッチ</button><span class="unit">単位</span><span class="sep"></span>
        <flat-select class="s-unit" label="単位" value="全て" grey></flat-select>
        <div class="tools">${["screen", "zoomfit", "prev", "pan", "steps"].map((n) => this.quick(n, n))}</div>
        <svg class="size" width="12" height="12" viewBox="0 0 12 12" aria-hidden="true"><path d="M9 1h2v2H9zM5 5h2v2H5zM9 5h2v2H9zM1 9h2v2H1zM5 9h2v2H5zM9 9h2v2H9z" fill="#bcc2ca"/></svg>
      </footer>
    </div>`;
  }
}
